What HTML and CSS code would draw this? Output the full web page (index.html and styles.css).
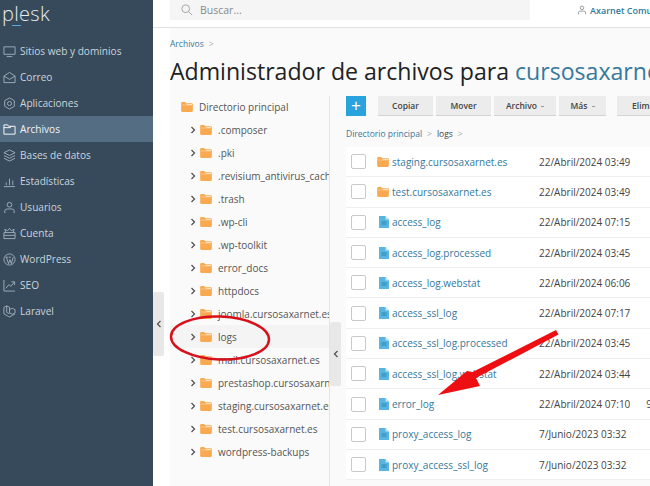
FILE: index.html
```html
<!DOCTYPE html>
<html lang="es">
<head>
    <meta charset="UTF-8">
    <meta name="viewport" content="width=device-width, initial-scale=1.0">
    <title>Administrador de archivos</title>
    <link rel="stylesheet" href="styles.css">
</head>
<body>
    <svg class="defs" width="0" height="0">
        <symbol id="folder" viewBox="0 0 14 12">
            <path d="M0 1.500C0 .7.6 0 1.400 0h3.400l1.400 1.600h6.400c.8 0 1.400.6 1.400 1.400v7.600c0 .8-.6 1.400-1.400 1.400H1.400C.6 12 0 11.400 0 10.600z" fill="#f9a94f"/>
            <path d="M1 3.400h5.600l1-1.100H13v1.600H1z" fill="#fde3c0"/>
        </symbol>
        <symbol id="file" viewBox="0 0 10 12">
            <path d="M0 0h6.500L10 3.500V12H0z" fill="#58b4e0"/>
            <path d="M6.500 0v3.500H10z" fill="#c4e5f5"/>
            <path d="M2.500 5.500h5v1h-5zM2.500 7.500h5v1h-5z" fill="#2b85b5"/>
        </symbol>
        <symbol id="chev" viewBox="0 0 6 8">
            <path d="M1.500 1l3 3-3 3" fill="none" stroke="#555" stroke-width="1.300"/>
        </symbol>
    </svg>

    <div class="app">
        <aside class="sidebar">
            <div class="logo">plesk</div>
            <nav class="nav">
                <a class="nav-item">
                    <svg viewBox="0 0 14 14"><path d="M1 2h12v8H1zM4 12.500h6"/></svg>Sitios web y dominios
                </a>
                <a class="nav-item">
                    <svg viewBox="0 0 14 14"><path d="M1 5.500L7 1.500l6 4V12.500H1zM1 5.500l6 3.500 6-3.500"/></svg>Correo
                </a>
                <a class="nav-item">
                    <svg viewBox="0 0 14 14"><path d="M7 1l5.200 3v6L7 13l-5.200-3V4z"/><circle cx="7" cy="7" r="2.200"/></svg>Aplicaciones
                </a>
                <a class="nav-item active">
                    <svg viewBox="0 0 14 14"><path d="M1 2h4l1 1.500h7V12H1zM1 5h7l1-1.500"/></svg>Archivos
                </a>
                <a class="nav-item">
                    <svg viewBox="0 0 14 14"><path d="M7 1l6 3-6 3-6-3zM1 7l6 3 6-3M1 10l6 3 6-3"/></svg>Bases de datos
                </a>
                <a class="nav-item">
                    <svg viewBox="0 0 14 14"><path d="M1 12.500h12M3.500 11V8M7 11V4M10.500 11V6"/></svg>Estadísticas
                </a>
                <a class="nav-item">
                    <svg viewBox="0 0 14 14"><circle cx="7" cy="4" r="2.500"/><path d="M2 13v-2.500C2 9 3.500 8.500 7 8.500s5 .5 5 2V13"/></svg>Usuarios
                </a>
                <a class="nav-item">
                    <svg viewBox="0 0 14 14"><path d="M1 6h12v6.500H1zM3 6L2 2.500l3 1.500L7 1.500 9 4l3-1.500L11 6M1 9h12"/></svg>Cuenta
                </a>
                <a class="nav-item">
                    <svg viewBox="0 0 14 14"><circle cx="7" cy="7" r="6"/><path d="M3.500 4.500L6 11.500l1.500-4.500L9 11.500l2-7M2.800 4.500h2.500M6 4.500h2.500"/></svg>WordPress
                </a>
                <a class="nav-item">
                    <svg viewBox="0 0 14 14"><path d="M1 1v12h12M3 10l3.500-4 2 2L12 3.500M9 3h3.500v3.500"/></svg>SEO
                </a>
                <a class="nav-item">
                    <svg viewBox="0 0 14 14"><path d="M1 2.500l3-1.500 3 1.500v6l3 1.500 3-1.500V5l-3-1.500L7 5M1 2.500v7L7 13l6-3.500M4 1v7l3 1.500"/></svg>Laravel
                </a>
            </nav>
        </aside>

        <div class="side-gutter">
            <button class="handle"><svg><use href="#chev"/></svg></button>
        </div>

        <main class="main">
            <header class="topbar">
                <div class="search">
                    <svg viewBox="0 0 14 14"><circle cx="5.500" cy="5.500" r="4.500"/><path d="M9 9l4 4"/></svg>
                    <span>Buscar...</span>
                </div>
                <div class="user">
                    <svg viewBox="0 0 14 14"><circle cx="7" cy="4" r="2.500"/><path d="M2 13v-2.500C2 9 3.500 8.500 7 8.500s5 .5 5 2V13"/></svg>
                    <span>Axarnet Comunicaciones</span>
                </div>
            </header>

            <div class="content">
                <div class="crumbs"><a>Archivos</a><span class="sep">&gt;</span></div>
                <h1>Administrador de archivos para <a>cursosaxarnet.es</a></h1>

                <div class="panes">
                    <section class="tree">
                        <div class="tree-row root"><svg class="ico"><use href="#folder"/></svg>Directorio principal</div>
                        <div class="tree-row"><svg class="chev"><use href="#chev"/></svg><svg class="ico"><use href="#folder"/></svg>.composer</div>
                        <div class="tree-row"><svg class="chev"><use href="#chev"/></svg><svg class="ico"><use href="#folder"/></svg>.pki</div>
                        <div class="tree-row"><svg class="chev"><use href="#chev"/></svg><svg class="ico"><use href="#folder"/></svg>.revisium_antivirus_cache</div>
                        <div class="tree-row"><svg class="chev"><use href="#chev"/></svg><svg class="ico"><use href="#folder"/></svg>.trash</div>
                        <div class="tree-row"><svg class="chev"><use href="#chev"/></svg><svg class="ico"><use href="#folder"/></svg>.wp-cli</div>
                        <div class="tree-row"><svg class="chev"><use href="#chev"/></svg><svg class="ico"><use href="#folder"/></svg>.wp-toolkit</div>
                        <div class="tree-row"><svg class="chev"><use href="#chev"/></svg><svg class="ico"><use href="#folder"/></svg>error_docs</div>
                        <div class="tree-row"><svg class="chev"><use href="#chev"/></svg><svg class="ico"><use href="#folder"/></svg>httpdocs</div>
                        <div class="tree-row"><svg class="chev"><use href="#chev"/></svg><svg class="ico"><use href="#folder"/></svg>joomla.cursosaxarnet.es</div>
                        <div class="tree-row current"><svg class="chev"><use href="#chev"/></svg><svg class="ico"><use href="#folder"/></svg>logs</div>
                        <div class="tree-row"><svg class="chev"><use href="#chev"/></svg><svg class="ico"><use href="#folder"/></svg>mail.cursosaxarnet.es</div>
                        <div class="tree-row"><svg class="chev"><use href="#chev"/></svg><svg class="ico"><use href="#folder"/></svg>prestashop.cursosaxarnet.es</div>
                        <div class="tree-row"><svg class="chev"><use href="#chev"/></svg><svg class="ico"><use href="#folder"/></svg>staging.cursosaxarnet.es</div>
                        <div class="tree-row"><svg class="chev"><use href="#chev"/></svg><svg class="ico"><use href="#folder"/></svg>test.cursosaxarnet.es</div>
                        <div class="tree-row"><svg class="chev"><use href="#chev"/></svg><svg class="ico"><use href="#folder"/></svg>wordpress-backups</div>
                    </section>

                    <div class="splitter">
                        <button class="handle handle-tree"><svg><use href="#chev"/></svg></button>
                    </div>

                    <section class="files">
                        <div class="toolbar">
                            <button class="btn-add">+</button>
                            <button class="btn btn-copy">Copiar</button>
                            <button class="btn btn-move">Mover</button>
                            <button class="btn btn-file">Archivo <i></i></button>
                            <button class="btn btn-more">Más <i></i></button>
                            <button class="btn btn-del">Eliminar</button>
                        </div>
                        <div class="path"><a>Directorio principal</a><span class="sep">&gt;</span>logs<span class="sep">&gt;</span></div>
                        <div class="rows">
                            <div class="row"><span class="check"></span><svg class="ico"><use href="#folder"/></svg><a>staging.cursosaxarnet.es</a><span class="date">22/Abril/2024 03:49</span></div>
                            <div class="row"><span class="check"></span><svg class="ico"><use href="#folder"/></svg><a>test.cursosaxarnet.es</a><span class="date">22/Abril/2024 03:49</span></div>
                            <div class="row"><span class="check"></span><svg class="ico doc"><use href="#file"/></svg><a>access_log</a><span class="date">22/Abril/2024 07:15</span></div>
                            <div class="row"><span class="check"></span><svg class="ico doc"><use href="#file"/></svg><a>access_log.processed</a><span class="date">22/Abril/2024 03:45</span></div>
                            <div class="row"><span class="check"></span><svg class="ico doc"><use href="#file"/></svg><a>access_log.webstat</a><span class="date">22/Abril/2024 06:06</span></div>
                            <div class="row"><span class="check"></span><svg class="ico doc"><use href="#file"/></svg><a>access_ssl_log</a><span class="date">22/Abril/2024 07:17</span></div>
                            <div class="row"><span class="check"></span><svg class="ico doc"><use href="#file"/></svg><a>access_ssl_log.processed</a><span class="date">22/Abril/2024 03:45</span></div>
                            <div class="row"><span class="check"></span><svg class="ico doc"><use href="#file"/></svg><a>access_ssl_log.webstat</a><span class="date">22/Abril/2024 03:44</span></div>
                            <div class="row"><span class="check"></span><svg class="ico doc"><use href="#file"/></svg><a>error_log</a><span class="date">22/Abril/2024 07:10</span><span class="size">9</span></div>
                            <div class="row"><span class="check"></span><svg class="ico doc"><use href="#file"/></svg><a>proxy_access_log</a><span class="date">7/Junio/2023 03:32</span></div>
                            <div class="row"><span class="check"></span><svg class="ico doc"><use href="#file"/></svg><a>proxy_access_ssl_log</a><span class="date">7/Junio/2023 03:32</span></div>
                        </div>
                    </section>
                </div>
            </div>
        </main>
    </div>

    <!-- red marks drawn on top of the screenshot -->
    <svg class="marks" viewBox="0 0 650 486">
        <ellipse cx="220" cy="338" rx="49" ry="21.500" transform="rotate(2 220 338)" fill="none" stroke="#d8101c" stroke-width="2.500"/>
        <path d="M556 330L558.500 334.500 476 378 480 386 438 395 467 371 472.500 372z" fill="#ee0f12"/>
    </svg>
</body>
</html>
```

FILE: styles.css
```css
* {
    box-sizing: border-box;
}

html, body {
    margin: 0;
    height: 100%;
    overflow: hidden;
}

body {
    position: relative;
    width: 650px;
    height: 486px;
    background: #fafafa;
    color: #444;
    font-family: "Open Sans", "Liberation Sans", sans-serif;
    font-size: 10.5px;
}

a {
    color: #36799c;
    text-decoration: none;
}

.defs {
    position: absolute;
}

.app {
    display: flex;
    height: 486px;
}

/* sidebar */
.sidebar {
    flex: 0 0 153px;
    background: #364a5c;
    color: #cfd8df;
}

.logo {
    height: 38px;
    padding: 2px 0 0 2px;
    color: #e6ecf0;
    font-size: 20px;
    font-weight: 300;
    line-height: 24px;
    letter-spacing: .3px;
}

.logo::after {
    content: "";
    display: block;
    width: 9px;
    height: 1px;
    margin: -1px 0 0 10px;
    background: #5aa9d6;
}

.nav-item {
    display: flex;
    align-items: center;
    gap: 4px;
    height: 26px;
    padding-left: 3px;
    color: #cbd4db;
    font-size: 10.100px;
}

.nav-item svg {
    flex: none;
    width: 13px;
    height: 13px;
    fill: none;
    stroke: #9fb0bd;
    stroke-width: 1;
}

.nav-item.active {
    background: #546d83;
    color: #f0f4f6;
}

.nav-item.active svg {
    stroke: #fff;
}

.side-gutter {
    flex: 0 0 17px;
    padding-top: 292px;
    background: #fff;
}

.handle {
    display: flex;
    align-items: center;
    justify-content: center;
    width: 11px;
    height: 64px;
    padding: 0;
    border: none;
    border-radius: 2px;
    background: #e8e8e8;
}

.handle svg {
    width: 6px;
    height: 8px;
    transform: scaleX(-1);
}

/* main */
.main {
    flex: 1;
    min-width: 0;
    overflow: hidden;
    margin-left: -17px;
    padding-left: 17px;
}

.topbar {
    display: flex;
    height: 28px;
    margin-left: -17px;
    padding-left: 17px;
    border-bottom: 1px solid #e2e2e2;
    background: #fff;
}

.search {
    flex: none;
    display: flex;
    align-items: center;
    gap: 7px;
    width: 360px;
    height: 20px;
    padding-left: 11px;
    background: #f5f5f5;
    color: #888;
    font-size: 10.500px;
}

.search svg {
    width: 12px;
    height: 12px;
    fill: none;
    stroke: #999;
}

.user {
    display: flex;
    align-items: center;
    gap: 3px;
    height: 20px;
    margin-left: 47px;
    color: #2e7a9e;
    font-size: 9px;
    font-weight: 600;
    white-space: nowrap;
}

.user svg {
    width: 10px;
    height: 10px;
    fill: none;
    stroke: #777;
}

.content {
    padding-top: 9px;
}

.crumbs {
    height: 13px;
    font-size: 8.500px;
    line-height: 13px;
}

.sep {
    margin: 0 5px;
    color: #aaa;
}

h1 {
    margin: 5px 0 0;
    color: #222;
    font-size: 23.100px;
    font-weight: 400;
    line-height: 32px;
    white-space: nowrap;
}

.panes {
    display: flex;
    margin-top: 9px;
}

/* tree */
.tree {
    flex: 0 0 159px;
    height: 378px;
    margin-top: -1px;
    overflow: hidden;
    color: #555;
    font-size: 10px;
}

.tree-row {
    display: flex;
    align-items: center;
    height: 23px;
    padding-left: 20px;
    white-space: nowrap;
}

.tree-row.root {
    padding-left: 11px;
}

.tree-row.current {
    background: #f4f4f4;
}

.chev {
    flex: none;
    width: 6px;
    height: 8px;
    margin-right: 4px;
}

.ico {
    flex: none;
    width: 12px;
    height: 10px;
    margin-right: 6px;
}

.splitter {
    flex: 0 0 17px;
    height: 390px;
    border-left: 1px solid #e4e4e4;
}

.handle-tree {
    margin-top: 226px;
}

/* file list */
.files {
    flex: 1;
    min-width: 0;
}

.toolbar {
    display: flex;
    height: 20px;
    margin-bottom: 11px;
    white-space: nowrap;
}

.btn-add {
    flex: none;
    width: 20px;
    margin-right: 12px;
    padding: 0;
    border: none;
    background: #29a3dd;
    color: #fff;
    font-size: 17px;
    font-weight: 300;
    line-height: 18px;
}

.btn {
    flex: none;
    margin-right: 3px;
    padding: 0;
    border: none;
    border-bottom: 1px solid #d4d4d4;
    background: #ececec;
    color: #444;
    font-family: inherit;
    font-size: 8.500px;
    font-weight: 600;
}

.btn i {
    display: inline-block;
    width: 3px;
    height: 1px;
    margin-left: 2px;
    vertical-align: middle;
    background: #999;
}

.btn-copy { width: 55px; }
.btn-move { width: 55px; }
.btn-file { width: 62px; }
.btn-more { width: 47px; margin-right: 11px; }
.btn-del { width: 64px; }

.path {
    height: 14px;
    margin-bottom: 6px;
    font-size: 8.500px;
    line-height: 14px;
}

.rows {
    background: #fff;
}

.row {
    display: flex;
    align-items: center;
    height: 30.300px;
    padding-left: 5px;
    border-bottom: 1px solid #eee;
    font-size: 10px;
    white-space: nowrap;
}

.check {
    flex: none;
    width: 15px;
    height: 15px;
    margin-right: 11px;
    border: 1px solid #c9c9c9;
    border-radius: 2px;
    background: #fff;
}

.row .ico {
    margin-right: 3px;
}

.row .ico.doc {
    width: 10px;
    height: 12px;
    margin: 0 3px 0 2px;
}

.row a {
    flex: 0 0 147px;
}

.date {
    flex: none;
    color: #444;
}

.size {
    margin-left: 16px;
}

/* annotation layer */
.marks {
    position: absolute;
    top: 0;
    left: 0;
    width: 650px;
    height: 486px;
    pointer-events: none;
}
```
